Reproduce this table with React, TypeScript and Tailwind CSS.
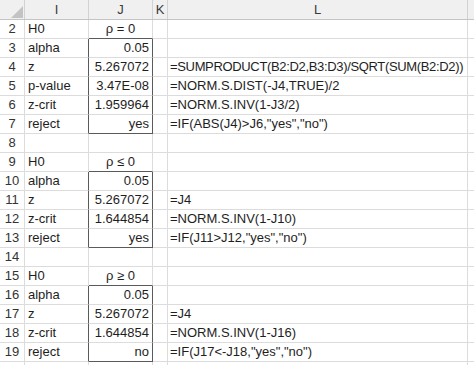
import React from "react"

type Row = {
  n?: number
  i?: string
  j?: string
  l?: string
  head?: boolean
  boxTop?: boolean
  boxed?: boolean
  boxEnd?: boolean
  tight?: boolean
}

const ROWS: Row[] = [
  { n: 2, i: "H0", j: "ρ = 0", head: true, boxTop: true },
  { n: 3, i: "alpha", j: "0.05", boxed: true },
  { n: 4, i: "z", j: "5.267072", l: "=SUMPRODUCT(B2:D2,B3:D3)/SQRT(SUM(B2:D2))", boxed: true, tight: true },
  { n: 5, i: "p-value", j: "3.47E-08", l: "=NORM.S.DIST(-J4,TRUE)/2", boxed: true },
  { n: 6, i: "z-crit", j: "1.959964", l: "=NORM.S.INV(1-J3/2)", boxed: true },
  { n: 7, i: "reject", j: "yes", l: '=IF(ABS(J4)>J6,"yes","no")', boxed: true, boxEnd: true },
  { n: 8 },
  { n: 9, i: "H0", j: "ρ ≤ 0", head: true, boxTop: true },
  { n: 10, i: "alpha", j: "0.05", boxed: true },
  { n: 11, i: "z", j: "5.267072", l: "=J4", boxed: true },
  { n: 12, i: "z-crit", j: "1.644854", l: "=NORM.S.INV(1-J10)", boxed: true },
  { n: 13, i: "reject", j: "yes", l: '=IF(J11>J12,"yes","no")', boxed: true, boxEnd: true },
  { n: 14 },
  { n: 15, i: "H0", j: "ρ ≥ 0", head: true, boxTop: true },
  { n: 16, i: "alpha", j: "0.05", boxed: true },
  { n: 17, i: "z", j: "5.267072", l: "=J4", boxed: true },
  { n: 18, i: "z-crit", j: "1.644854", l: "=NORM.S.INV(1-J16)", boxed: true },
  { n: 19, i: "reject", j: "no", l: '=IF(J17<-J18,"yes","no")', boxed: true, boxEnd: true },
  {}, // row 20, only a sliver shows
]

export default function App() {
  return (
    <div
      className="h-[365px] w-[474px] overflow-hidden bg-white text-[13px] text-[#1e1e1e]"
      style={{ fontFamily: '"Liberation Sans", Arial, sans-serif' }}
    >
      {/* Column headers */}
      <div className="flex h-[20px] border-b border-[#c4c4c4] bg-[#f0f0f0] text-[#3a3a3a]">
        <div className="relative w-[25px] shrink-0 border-r border-[#d2d2d2]">
          <svg className="absolute left-[11px] top-[6px]" width="12" height="12" viewBox="0 0 12 12">
            <polygon points="12,0 12,12 0,12" fill="#c3c3c3" />
          </svg>
        </div>
        <div className="flex w-[64px] shrink-0 items-center justify-center border-r border-[#d2d2d2]">I</div>
        <div className="flex w-[64px] shrink-0 items-center justify-center border-r border-[#d2d2d2]">J</div>
        <div className="flex w-[15px] shrink-0 items-center justify-center border-r border-[#d2d2d2]">K</div>
        <div className="flex w-[300px] shrink-0 items-center justify-center border-r border-[#d2d2d2]">L</div>
        <div className="flex-1" />
      </div>

      {ROWS.map((r, idx) => (
        <div key={idx} className="flex h-[19px]">
          <div className="flex w-[25px] shrink-0 items-center justify-center border-r border-b border-[#dcdcdc] text-[#333]">
            {r.n}
          </div>
          <div
            className={`flex w-[64px] shrink-0 items-center border-r border-b border-b-[#dcdcdc] pl-[3px] ${
              r.boxed ? "border-r-[#5a5a5a]" : "border-r-[#dcdcdc]"
            }`}
          >
            {r.i}
          </div>
          <div
            className={`flex w-[64px] shrink-0 items-center border-r border-b px-[3px] ${
              r.head ? "justify-center" : "justify-end"
            } ${r.boxed ? "border-r-[#5a5a5a]" : "border-r-[#dcdcdc]"} ${
              r.boxTop || r.boxEnd ? "border-b-[#5a5a5a]" : "border-b-[#dcdcdc]"
            }`}
          >
            {r.j}
          </div>
          <div className="w-[15px] shrink-0 border-r border-b border-[#dcdcdc]" />
          <div
            className={`flex w-[300px] shrink-0 items-center whitespace-nowrap border-r border-b border-[#dcdcdc] pl-[2px] ${
              r.tight ? "tracking-[-0.34px]" : ""
            }`}
          >
            {r.l}
          </div>
          <div className="flex-1 border-b border-[#dcdcdc]" />
        </div>
      ))}
    </div>
  )
}
